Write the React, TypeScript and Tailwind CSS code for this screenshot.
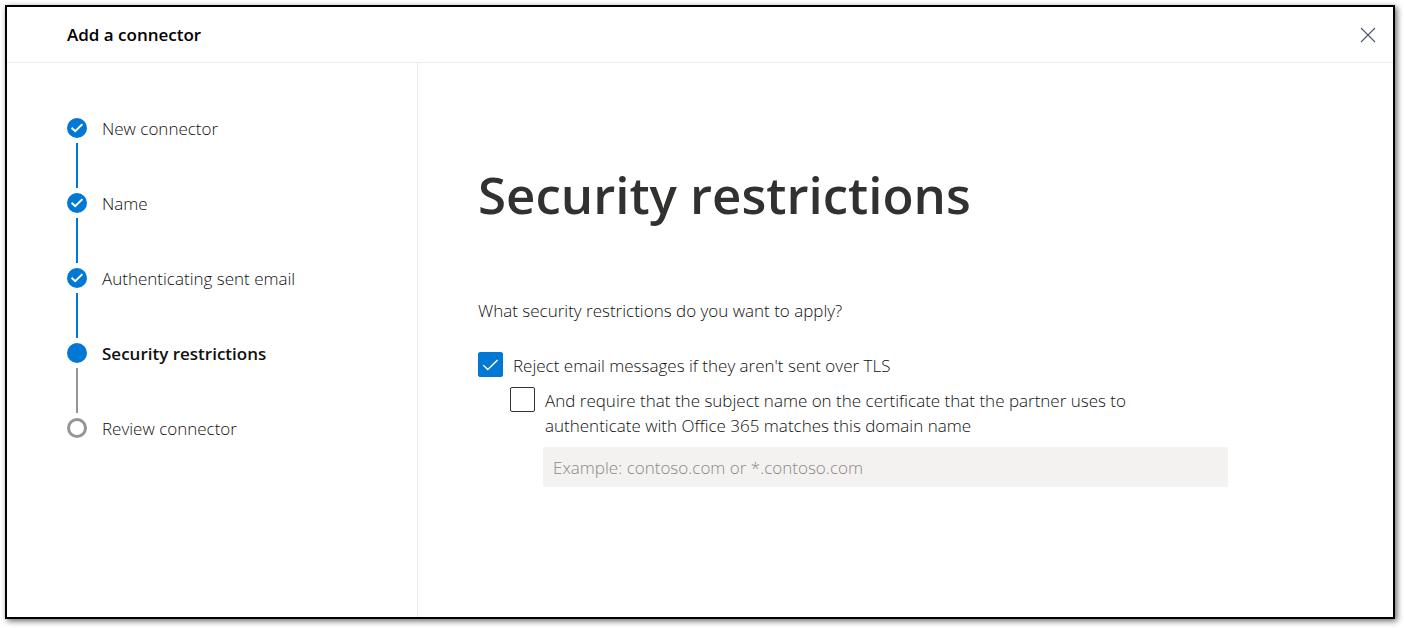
import React, { useState } from 'react';

type StepState = 'done' | 'current' | 'upcoming';

interface Step {
  label: string;
  state: StepState;
}

const steps: Step[] = [
  { label: 'New connector', state: 'done' },
  { label: 'Name', state: 'done' },
  { label: 'Authenticating sent email', state: 'done' },
  { label: 'Security restrictions', state: 'current' },
  { label: 'Review connector', state: 'upcoming' },
];

const StepMarker: React.FC<{ state: StepState }> = ({ state }) => {
  if (state === 'upcoming') {
    return <span className="block w-5 h-5 rounded-full border-[3px] border-[#979593]" />;
  }

  return (
    <span className="block w-5 h-5 rounded-full bg-[#0078d4]">
      {state === 'done' && (
        <svg className="w-5 h-5" viewBox="0 0 20 20" fill="none" stroke="white" strokeWidth={2} aria-hidden="true">
          <path d="M4.6 9.8L8.2 13.2L15.4 6.1" />
        </svg>
      )}
    </span>
  );
};

const WizardSteps: React.FC = () => (
  <ol>
    {steps.map((step, index) => {
      const isLast = index === steps.length - 1;
      return (
        <li
          key={step.label}
          aria-current={step.state === 'current' ? 'step' : undefined}
          className="flex gap-[15px]"
        >
          <div className="flex flex-col items-center">
            <StepMarker state={step.state} />
            {!isLast && (
              <span className={`w-0.5 h-[45px] my-[5px] ${step.state === 'done' ? 'bg-[#0078d4]' : 'bg-[#979593]'}`} />
            )}
          </div>
          <span className={`leading-[22px] ${step.state === 'current' ? 'font-semibold' : ''}`}>{step.label}</span>
        </li>
      );
    })}
  </ol>
);

interface CheckboxProps {
  id: string;
  label: string;
  checked: boolean;
  onChange: (checked: boolean) => void;
}

const Checkbox: React.FC<CheckboxProps> = ({ id, label, checked, onChange }) => (
  <div className="flex items-start gap-[10px]">
    <span className="grid shrink-0 w-[25px] h-[25px]">
      <input
        id={id}
        type="checkbox"
        checked={checked}
        onChange={(e) => onChange(e.target.checked)}
        className="peer col-start-1 row-start-1 appearance-none w-[25px] h-[25px] rounded-xs border border-[#323130] bg-white checked:bg-[#0078d4] checked:border-[#0078d4]"
      />
      <svg
        className="col-start-1 row-start-1 w-[25px] h-[25px] pointer-events-none invisible peer-checked:visible"
        viewBox="0 0 25 25"
        fill="none"
        stroke="white"
        strokeWidth={1.4}
        aria-hidden="true"
      >
        <path d="M5.3 13.2L9.8 17.6L19.6 8" />
      </svg>
    </span>
    <label htmlFor={id} className="pt-px leading-[25px]">{label}</label>
  </div>
);

const App: React.FC = () => {
  const [rejectNonTls, setRejectNonTls] = useState(true);
  const [requireSubject, setRequireSubject] = useState(false);
  const [domain, setDomain] = useState('');

  return (
    <div className="min-h-screen flex bg-white pt-[5px] pl-[5px] pr-[9px] pb-[9px] font-['Open_Sans','Segoe_UI',sans-serif] font-light text-[17px] text-[#11100f]">
      <div className="flex-1 flex flex-col bg-white border-2 border-black shadow-[2px_2px_6px_rgba(0,0,0,0.6)]">
        <header className="flex items-center justify-between h-14 pl-[60px] pr-[15px] border-b border-[#edebe9]">
          <h2 className="font-semibold text-black">Add a connector</h2>
          <button type="button" aria-label="Close" className="p-0.5">
            <svg className="w-4 h-4" viewBox="0 0 16 16" fill="none" stroke="#4b5563" strokeWidth={1.1}>
              <path d="M1 1L15 15M15 1L1 15" />
            </svg>
          </button>
        </header>

        <div className="flex-1 flex">
          <nav aria-label="Progress" className="w-[411px] shrink-0 pt-[55px] pl-[60px] border-r border-[#edebe9]">
            <WizardSteps />
          </nav>

          <main className="flex-1 pt-24 pl-[60px] pr-10">
            <h1 className="text-[51px] leading-[70px] font-semibold text-[#323130]">Security restrictions</h1>
            <p className="mt-[69px] leading-[25px]">What security restrictions do you want to apply?</p>

            <div className="mt-[29px]">
              <Checkbox
                id="reject-tls"
                label="Reject email messages if they aren't sent over TLS"
                checked={rejectNonTls}
                onChange={setRejectNonTls}
              />
              <div className="mt-[9px] pl-8 max-w-[685px]">
                <Checkbox
                  id="require-subject"
                  label="And require that the subject name on the certificate that the partner uses to authenticate with Office 365 matches this domain name"
                  checked={requireSubject}
                  onChange={setRequireSubject}
                />
              </div>
              <div className="mt-[9px] pl-[65px] max-w-[750px]">
                <input
                  type="text"
                  aria-label="Domain name"
                  placeholder="Example: contoso.com or *.contoso.com"
                  value={domain}
                  onChange={(e) => setDomain(e.target.value)}
                  disabled={!requireSubject}
                  className="block w-full h-10 px-[10px] rounded-xs bg-[#f3f2f1] placeholder:text-[#8a8886]"
                />
              </div>
            </div>
          </main>
        </div>
      </div>
    </div>
  );
};

export default App;
